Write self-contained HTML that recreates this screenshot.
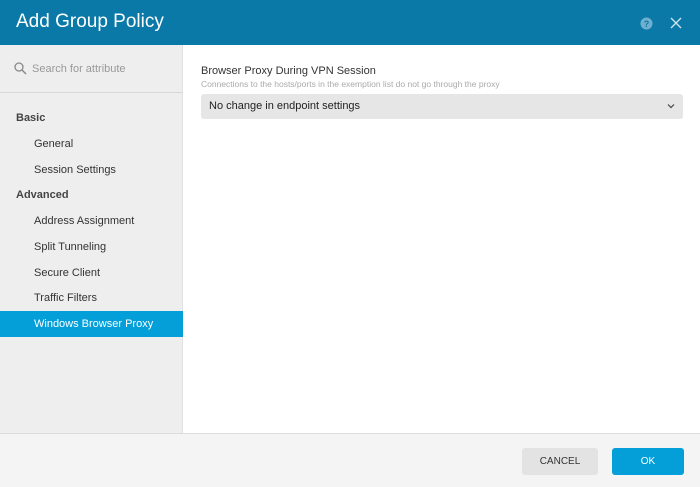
<!DOCTYPE html>
<html><head><style>
*{margin:0;padding:0;box-sizing:border-box}
body{width:700px;height:487px;font-family:"Liberation Sans",Arial,sans-serif;position:relative;overflow:hidden;background:#fff}
.hdr{position:absolute;left:0;top:0;width:700px;height:45px;background:#0b79a7}
.hdr h1{position:absolute;left:16px;top:11px;font-size:19px;font-weight:normal;color:#fff}
.side{position:absolute;left:0;top:45px;width:183px;height:388px;background:#eeeeee;border-right:1px solid #e2e2e2}
.search{position:absolute;left:0;top:0;width:183px;height:48px;border-bottom:1px solid #d8d8d8}
.search span{position:absolute;left:32px;top:18px;font-size:11px;color:#999}
.it{position:absolute;left:0;width:183px;height:26px;line-height:26px;font-size:11px;color:#333;padding-left:34px}
.sec{padding-left:16px;font-weight:bold;color:#444}
.sel{background:#049fd9;color:#fff}
.foot{position:absolute;left:0;top:433px;width:700px;height:54px;background:#f4f4f4;border-top:1px solid #dcdcdc}
.btn{position:absolute;top:14px;height:27px;line-height:27px;text-align:center;font-size:10px;border-radius:3px}
</style></head><body>
<div class="hdr"><h1>Add Group Policy</h1>
<svg style="position:absolute;left:640px;top:17px" width="13" height="13" viewBox="0 0 13 13"><circle cx="6.5" cy="6.5" r="6" fill="#6fb0cf"/><text x="6.5" y="10" font-size="9" font-weight="bold" text-anchor="middle" fill="#0b79a7" font-family="Liberation Sans">?</text></svg>
<svg style="position:absolute;left:670px;top:17px" width="12" height="12" viewBox="0 0 12 12"><path d="M1 1L11 11M11 1L1 11" stroke="#cfe6f0" stroke-width="1.3"/></svg>
</div>
<div class="side">
<div class="search"><svg style="position:absolute;left:14px;top:17px" width="13" height="13" viewBox="0 0 13 13"><circle cx="5" cy="5" r="4" fill="none" stroke="#888" stroke-width="1.3"/><path d="M8 8L12 12" stroke="#888" stroke-width="1.4"/></svg><span>Search for attribute</span></div>
<div class="it sec" style="top:60px">Basic</div>
<div class="it" style="top:86px">General</div>
<div class="it" style="top:112px">Session Settings</div>
<div class="it sec" style="top:137px">Advanced</div>
<div class="it" style="top:163px">Address Assignment</div>
<div class="it" style="top:189px">Split Tunneling</div>
<div class="it" style="top:215px">Secure Client</div>
<div class="it" style="top:240px">Traffic Filters</div>
<div class="it sel" style="top:266px">Windows Browser Proxy</div>
</div>
<div style="position:absolute;left:201px;top:65px;font-size:11px;color:#333">Browser Proxy During VPN Session</div>
<div style="position:absolute;left:201px;top:79px;font-size:8.5px;color:#aaa">Connections to the hosts/ports in the exemption list do not go through the proxy</div>
<div style="position:absolute;left:201px;top:94px;width:482px;height:25px;background:#e6e6e6;border-radius:3px;font-size:11px;color:#222;line-height:25px;padding-left:8px">No change in endpoint settings
<svg style="position:absolute;right:8px;top:9px" width="8" height="6" viewBox="0 0 8 6"><path d="M1 1.5L4 4.5L7 1.5" fill="none" stroke="#444" stroke-width="1.2"/></svg></div>
<div class="foot">
<div class="btn" style="left:522px;width:76px;background:#e3e3e3;color:#333">CANCEL</div>
<div class="btn" style="left:612px;width:72px;background:#049fd9;color:#fff">OK</div>
</div>
</body></html>
